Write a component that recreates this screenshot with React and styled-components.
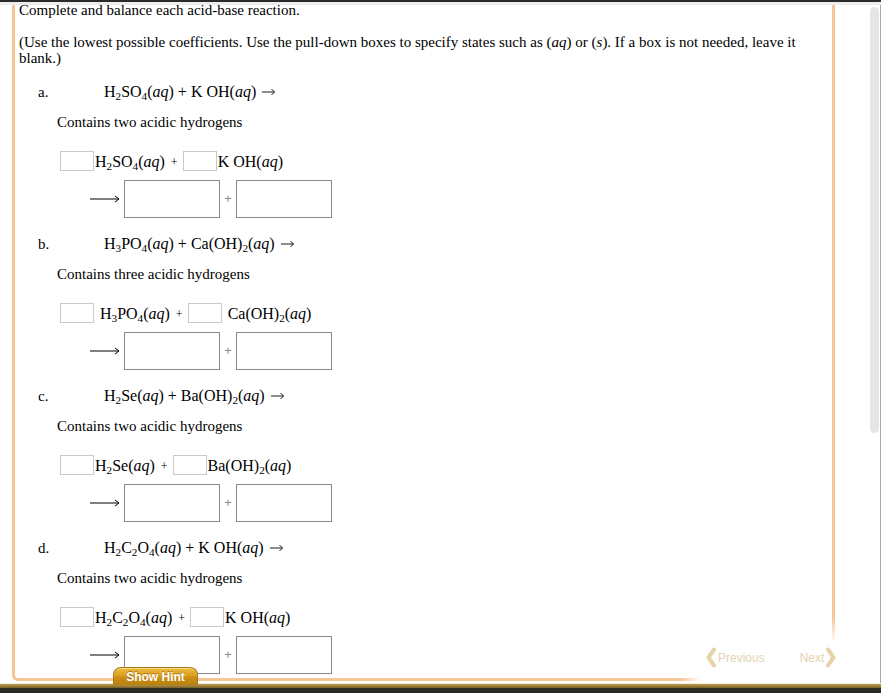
import React from 'react';
import styled, { createGlobalStyle } from 'styled-components';

const ORANGE = '#f6c594';
const ORANGE_CLEAR = 'rgba(246, 197, 148, 0)';

const GlobalStyle = createGlobalStyle`
  html, body {
    margin: 0;
    padding: 0;
    background: #fff;
  }
  body {
    font-family: "Liberation Serif", "Times New Roman", serif;
    color: #000;
    overflow: hidden;
  }
`;

const Window = styled.div`
  position: relative;
  width: 881px;
  height: 693px;
  overflow: hidden;
  background: #fff;
  display: flex;
  flex-direction: column;
`;

const TopBar = styled.div`
  flex: none;
  height: 3px;
  border-top: 2px solid #2a2a2a;
  background: #ececec;
`;

const Body = styled.div`
  flex: none;
  height: 678px;
  display: flex;
`;

const Content = styled.div`
  flex: 1;
  min-width: 0;
`;

const Gutter = styled.div`
  flex: none;
  width: 13px;
  box-sizing: border-box;
  padding: 2px 0 0 2px;
  border-right: 1px solid #a9a9a9;
`;

const Thumb = styled.div`
  width: 9px;
  height: 426px;
  border-radius: 5px;
  background: #e6e6e6;
`;

const Panel = styled.section`
  position: relative;
  display: flex;
  flex-direction: column;
  margin-left: 12px;
  width: 823px;
  box-sizing: border-box;
  padding: 0 16px 4px 4px;
  border-left: 3px solid ${ORANGE};
  border-bottom: 3px solid ${ORANGE};
  border-bottom-left-radius: 6px;

  /* right rule, fading out towards the bottom */
  &::before {
    content: '';
    position: absolute;
    top: 0;
    right: 0;
    width: 3px;
    height: 638px;
    background: linear-gradient(to bottom, ${ORANGE} 612px, ${ORANGE_CLEAR} 100%);
  }

  /* bottom rule fades out on the right */
  &::after {
    content: '';
    position: absolute;
    right: 0;
    bottom: -3px;
    width: 155px;
    height: 3px;
    background: linear-gradient(to right, rgba(255, 255, 255, 0), #fff 20px);
  }
`;

const Heading = styled.p`
  margin: -3px 0 0;
  font-size: 15px;
  line-height: 16px;
`;

const Instructions = styled.p`
  margin: 16px 0 0;
  font-size: 15px;
  line-height: 16px;
`;

const Problem = styled.div`
  display: flex;
  flex-direction: column;
  margin-top: 16px;
`;

const EquationRow = styled.div`
  display: flex;
  align-items: baseline;
  height: 20px;
`;

const Label = styled.span`
  flex: none;
  width: 66px;
  margin-left: 19px;
  font-size: 15px;
  line-height: 20px;
`;

const Math = styled.span`
  font-family: "Liberation Serif", "Times New Roman", serif;
  font-size: 16px;
  line-height: ${(p) => p.$lh || 20}px;
  white-space: nowrap;
`;

const Var = styled.i`
  font-style: italic;
`;

const Sub = styled.sub`
  font-size: 70%;
  line-height: 0;
  vertical-align: -0.3em;
`;

const Op = styled.span`
  margin: 0 4px;
`;

const EqArrow = styled.svg`
  width: 13px;
  height: 8px;
  margin-left: 6px;
  vertical-align: 1px;
`;

const HintText = styled.p`
  margin: 12px 0 0 38px;
  font-size: 15px;
  line-height: 16px;
`;

const CoefRow = styled.div`
  display: flex;
  align-items: flex-end;
  height: 20px;
  margin: 21px 0 0 41px;
`;

const CoefBox = styled.span`
  flex: none;
  width: 34px;
  height: 20px;
  box-sizing: border-box;
  border: 1px solid #c9c9c9;
  background: #fff;
  margin-right: ${(p) => p.$gap}px;
`;

const SmallPlus = styled.span`
  font-size: 12px;
  line-height: 18px;
  margin: 0 5px 0 6px;
`;

const ProductRow = styled.div`
  display: flex;
  align-items: center;
  height: 38px;
  margin: 9px 0 0 71px;
`;

const ArrowIcon = styled.svg`
  flex: none;
  width: 30px;
  height: 10px;
  margin-right: 4px;
`;

const AnswerBox = styled.span`
  flex: none;
  width: 96px;
  height: 38px;
  box-sizing: border-box;
  border: 1px solid #8a8a8a;
  background: #fff;
`;

const ProductPlus = styled.span`
  flex: none;
  width: 16px;
  text-align: center;
  font-family: "Liberation Sans", Arial, sans-serif;
  font-size: 12px;
  color: #7a8796;
`;

const Nav = styled.nav`
  position: absolute;
  left: 705px;
  top: 647px;
  display: flex;
  align-items: center;
  font-family: "Liberation Sans", Arial, sans-serif;
  font-size: 12px;
  color: #e3d3b1;
`;

const NavLink = styled.span`
  display: flex;
  align-items: center;
  gap: 1px;
  margin-right: ${(p) => p.$space || 0}px;
`;

const Chevron = styled.svg`
  width: 12px;
  height: 21px;
`;

const HintButton = styled.button`
  position: absolute;
  left: 113px;
  top: 667px;
  width: 85px;
  height: 18px;
  padding: 1px 0 0;
  box-sizing: border-box;
  border: 1px solid #a9780f;
  border-bottom: none;
  border-radius: 8px 8px 0 0;
  background: linear-gradient(
    to bottom,
    #efb941 0%,
    #dc9e1f 45%,
    #cd8e14 55%,
    #b9810e 100%
  );
  box-shadow: inset 0 1px 0 rgba(255, 236, 170, 0.7);
  color: #fff;
  font-family: "Liberation Sans", Arial, sans-serif;
  font-weight: bold;
  font-size: 12px;
  line-height: 15px;
  text-shadow: 0 -1px 0 rgba(90, 55, 0, 0.45);
  cursor: pointer;
`;

const BottomBar = styled.div`
  flex: none;
  height: 9px;
  border-top: 1px solid #f3ecdd;
  background: linear-gradient(
    to bottom,
    #bda04f 0,
    #7a5f26 4px,
    #2e2b26 4px,
    #2a2824 100%
  );
`;

const LongArrow = () => (
  <ArrowIcon viewBox="0 0 30 10">
    <line x1="0" y1="5" x2="29" y2="5" stroke="#000" strokeWidth="1" />
    <polyline points="25,2 29,5 25,8" fill="none" stroke="#000" strokeWidth="1" />
  </ArrowIcon>
);

const ShortArrow = () => (
  <EqArrow viewBox="0 0 13 8">
    <line x1="0" y1="4" x2="12.5" y2="4" stroke="#000" strokeWidth="0.9" />
    <polyline points="9.5,1 12.5,4 9.5,7" fill="none" stroke="#000" strokeWidth="0.9" />
  </EqArrow>
);

const H2 = () => (
  <>
    H<Sub>2</Sub>
  </>
);

const AQ = () => (
  <>
    (<Var>aq</Var>)
  </>
);

const problems = [
  {
    label: 'a.',
    hint: 'Contains two acidic hydrogens',
    acid: (
      <>
        <H2 />SO<Sub>4</Sub>
        <AQ />
      </>
    ),
    base: (
      <>
        K OH<AQ />
      </>
    ),
    gaps: [1, 1],
  },
  {
    label: 'b.',
    hint: 'Contains three acidic hydrogens',
    acid: (
      <>
        H<Sub>3</Sub>PO<Sub>4</Sub>
        <AQ />
      </>
    ),
    base: (
      <>
        Ca(OH)<Sub>2</Sub>
        <AQ />
      </>
    ),
    gaps: [6, 6],
  },
  {
    label: 'c.',
    hint: 'Contains two acidic hydrogens',
    acid: (
      <>
        <H2 />Se<AQ />
      </>
    ),
    base: (
      <>
        Ba(OH)<Sub>2</Sub>
        <AQ />
      </>
    ),
    gaps: [1, 1],
  },
  {
    label: 'd.',
    hint: 'Contains two acidic hydrogens',
    acid: (
      <>
        <H2 />C<Sub>2</Sub>O<Sub>4</Sub>
        <AQ />
      </>
    ),
    base: (
      <>
        K OH<AQ />
      </>
    ),
    gaps: [1, 1],
  },
];

const ProblemBlock = ({ item }) => (
  <Problem>
    <EquationRow>
      <Label>{item.label}</Label>
      <Math>
        {item.acid}
        <Op>+</Op>
        {item.base}
        <ShortArrow />
      </Math>
    </EquationRow>
    <HintText>{item.hint}</HintText>
    <CoefRow>
      <CoefBox $gap={item.gaps[0]} />
      <Math $lh={18}>{item.acid}</Math>
      <SmallPlus>+</SmallPlus>
      <CoefBox $gap={item.gaps[1]} />
      <Math $lh={18}>{item.base}</Math>
    </CoefRow>
    <ProductRow>
      <LongArrow />
      <AnswerBox />
      <ProductPlus>+</ProductPlus>
      <AnswerBox />
    </ProductRow>
  </Problem>
);

export default function App() {
  return (
    <>
      <GlobalStyle />
      <Window>
        <TopBar />
        <Body>
          <Content>
            <Panel>
              <Heading>Complete and balance each acid-base reaction.</Heading>
              <Instructions>
                (Use the lowest possible coefficients. Use the pull-down boxes to specify
                states such as (<Var>aq</Var>) or (<Var>s</Var>). If a box is not needed,
                leave it blank.)
              </Instructions>
              {problems.map((item) => (
                <ProblemBlock key={item.label} item={item} />
              ))}
            </Panel>
          </Content>
          <Gutter>
            <Thumb />
          </Gutter>
        </Body>
        <BottomBar />
        <HintButton type="button">Show Hint</HintButton>
        <Nav>
          <NavLink $space={35}>
            <Chevron viewBox="0 0 12 21">
              <polyline
                points="9,2.5 3.5,10.5 9,18.5"
                fill="none"
                stroke="#e6d3a8"
                strokeWidth="4"
                strokeLinecap="round"
                strokeLinejoin="round"
              />
            </Chevron>
            Previous
          </NavLink>
          <NavLink>
            Next
            <Chevron viewBox="0 0 12 21">
              <polyline
                points="3,2.5 8.5,10.5 3,18.5"
                fill="none"
                stroke="#e6d3a8"
                strokeWidth="4"
                strokeLinecap="round"
                strokeLinejoin="round"
              />
            </Chevron>
          </NavLink>
        </Nav>
      </Window>
    </>
  );
}
